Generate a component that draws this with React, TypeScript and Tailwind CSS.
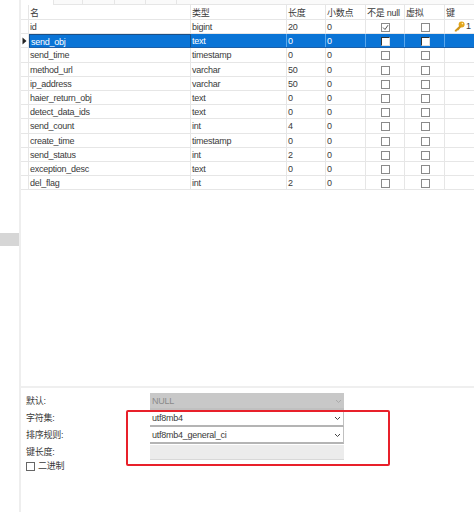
const fields = [
  ["id", "bigint", "20", "0", true, true],
  ["send_obj", "text", "0", "0", false, false],
  ["send_time", "timestamp", "0", "0", false, false],
  ["method_url", "varchar", "50", "0", false, false],
  ["ip_address", "varchar", "50", "0", false, false],
  ["haier_return_obj", "text", "0", "0", false, false],
  ["detect_data_ids", "text", "0", "0", false, false],
  ["send_count", "int", "4", "0", false, false],
  ["create_time", "timestamp", "0", "0", false, false],
  ["send_status", "int", "2", "0", false, false],
  ["exception_desc", "text", "0", "0", false, false],
  ["del_flag", "int", "2", "0", false, false],
] as const;

const base = "shrink-0 h-full pl-[1px] pt-[2px] flex items-center overflow-hidden whitespace-nowrap";
const cell = `${base} border-r border-[#e6e6e6]`;
const selCell = `${base} border-r border-[#5aa7ec]`;

function Check({ checked, inverted }: { checked?: boolean; inverted?: boolean }) {
  return (
    <span
      className={
        inverted
          ? "w-[9px] h-[9px] bg-white border border-t-[#333] border-l-[#333] border-r-[#ddd] border-b-[#ddd]"
          : "w-[9px] h-[9px] bg-white border border-[#8a8a8a] flex items-center justify-center"
      }
    >
      {checked && (
        <svg width="7" height="7" viewBox="0 0 7 7">
          <path d="M1 3.5 L3 5.5 L6 1.2" fill="none" stroke="#555" strokeWidth="1" />
        </svg>
      )}
    </span>
  );
}

function KeyIcon() {
  return (
    <svg width="11" height="11" viewBox="0 0 11 11">
      <circle cx="7.6" cy="3.4" r="3" fill="#e3a61c" />
      <path d="M6 4.2 L0.8 9.2 L0.8 10.6 L2.8 10.6 L2.8 9.4 L4.2 9.4 L7.2 6" fill="#d0951a" />
      <circle cx="8.4" cy="2.6" r="0.8" fill="#fff2c0" />
    </svg>
  );
}

function Row({ f, selected }: { f: (typeof fields)[number]; selected: boolean }) {
  const c = selected ? selCell : cell;
  return (
    <div className="flex h-[14.2px]">
      <div className="w-[8px] shrink-0 h-full border-r border-b border-[#e6e6e6] flex items-center justify-center">
        {selected && (
          <svg width="5" height="8" viewBox="0 0 5 8">
            <path d="M0.5 0.5 L4.5 4 L0.5 7.5 Z" fill="#222" />
          </svg>
        )}
      </div>
      <div className={`flex flex-1 min-w-0 h-full border-b ${selected ? "border-[#1c5fa8] bg-[#0a74d6] text-white" : "border-[#e6e6e6]"}`}>
        <div className={`${selected ? `${base} border-t border-l border-r border-[#1b4f86]` : cell} w-[162px]`}>{f[0]}</div>
        <div className={`${c} w-[96px]`}>{f[1]}</div>
        <div className={`${c} w-[39px]`}>{f[2]}</div>
        <div className={`${c} w-[40px]`}>{f[3]}</div>
        <div className={`${c} w-[39px] justify-center pt-0`}>
          <Check checked={f[4]} inverted={selected} />
        </div>
        <div className={`${c} w-[40px] justify-center pl-[2px] pt-0`}>
          <Check inverted={selected} />
        </div>
        <div className="flex-1 h-full flex items-center pl-[9px] gap-[1px]">
          {f[5] && (
            <>
              <KeyIcon />
              <span>1</span>
            </>
          )}
        </div>
      </div>
    </div>
  );
}

function Combo({ value, disabled }: { value?: string; disabled?: boolean }) {
  return (
    <div
      className={`w-[194px] h-[17px] flex items-center justify-between pl-[2px] pr-[2px] pt-[1px] border-b-2 ${
        disabled ? "bg-[#c8c8c8] border-[#c0c0c0] text-[#8a8a8a]" : "bg-white border-[#b4b4b4] border-r border-r-[#c0c0c0]"
      }`}
    >
      <span>{value}</span>
      <svg width="7" height="5" viewBox="0 0 7 5">
        <path d="M1 1 L3.5 3.5 L6 1" fill="none" stroke={disabled ? "#aaa" : "#444"} strokeWidth="1" />
      </svg>
    </div>
  );
}

function FormRow({ label, children }: { label: string; children?: React.ReactNode }) {
  return (
    <div className="flex h-[17px] items-center">
      <div className="w-[124px] shrink-0">{label}</div>
      {children}
    </div>
  );
}

export default function App() {
  return (
    <div className="relative w-[474px] h-[512px] bg-white text-[#3a3a3a] text-[9px] tracking-[-0.25px] leading-none overflow-hidden font-['Liberation_Sans','Noto_Sans_CJK_SC',sans-serif]">
      <div className="flex h-full">
        {/* left pane */}
        <div className="w-[21px] shrink-0 h-full border-r-2 border-[#eeeeee] flex flex-col pt-[233px]">
          <div className="h-[13px] bg-[#d6d6d6]" />
        </div>

        <div className="flex-1 flex flex-col min-w-0">
          {/* tabs strip */}
          <div className="h-[5px] flex items-stretch">
            <div className="w-[33px] border-r border-[#e6e6e6]" />
            <div className="w-[29px] border-r border-b border-[#e6e6e6] bg-[#fafafa]" />
            <div className="w-[32px] border-r border-b border-[#e6e6e6] bg-[#fafafa]" />
            <div className="w-[31px] border-r border-b border-[#e6e6e6] bg-[#fafafa]" />
            <div className="w-[31px] border-r border-b border-[#e6e6e6] bg-[#fafafa]" />
            <div className="flex-1 border-b border-[#e6e6e6] bg-[#fafafa]" />
          </div>

          {/* table */}
          <div className="flex h-[15px] border-b border-[#e6e6e6]">
            <div className="w-[8px] shrink-0 border-r border-[#e6e6e6]" />
            <div className={`${cell} w-[162px]`}>名</div>
            <div className={`${cell} w-[96px]`}>类型</div>
            <div className={`${cell} w-[39px]`}>长度</div>
            <div className={`${cell} w-[40px]`}>小数点</div>
            <div className={`${cell} w-[39px]`}>不是 null</div>
            <div className={`${cell} w-[40px]`}>虚拟</div>
            <div className="flex-1 flex items-center pl-[1px] pt-[2px]">键</div>
          </div>
          {fields.map((f, i) => (
            <Row key={f[0]} f={f} selected={i === 1} />
          ))}

          <div className="flex-1" />

          {/* bottom form */}
          <div className="h-[126px] border-t-2 border-[#efefef] pl-[5px] pt-[5px]">
            <FormRow label="默认:">
              <Combo value="NULL" disabled />
            </FormRow>
            <FormRow label="字符集:">
              <Combo value="utf8mb4" />
            </FormRow>
            <FormRow label="排序规则:">
              <Combo value="utf8mb4_general_ci" />
            </FormRow>
            <FormRow label="键长度:">
              <div className="w-[194px] h-[15px] bg-[#ececec] border-b border-[#d8d8d8]" />
            </FormRow>
            <div className="flex items-center gap-[3px] h-[10px]">
              <span className="w-[9px] h-[9px] border border-[#666] bg-white" />
              <span>二进制</span>
            </div>
          </div>
        </div>
      </div>

      {/* red annotation box */}
      <div className="absolute left-[126px] top-[410px] w-[264px] h-[56px] border-2 border-[#e8202a] rounded-[2px]" />
    </div>
  );
}
